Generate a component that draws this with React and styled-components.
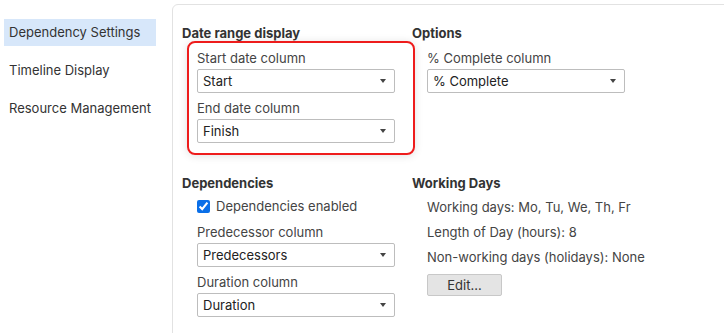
import React from 'react';
import styled, { createGlobalStyle } from 'styled-components';

const GlobalStyle = createGlobalStyle`
  html, body {
    margin: 0;
    padding: 0;
    background: #fff;
    overflow: hidden;
  }
  body {
    font-family: Inter, "Noto Sans", sans-serif;
    font-size: 13px;
    color: #333;
  }
`;

const NAV = ['Dependency Settings', 'Timeline Display', 'Resource Management'];

const Page = styled.div`
  display: flex;
  align-items: flex-start;
  width: 724px;
  height: 333px;
  padding: 4px 0 0 4px;
  box-sizing: border-box;
`;

const Sidebar = styled.nav`
  width: 152px;
  flex-shrink: 0;
  display: flex;
  flex-direction: column;
  gap: 11px;
  padding-top: 15px;
`;

const NavItem = styled.div`
  height: 27px;
  line-height: 27px;
  padding-left: 5px;
  font-size: 13px;
  color: #333;
  background: ${(p) => (p.$active ? '#d7e7fa' : 'transparent')};
`;

const Panel = styled.section`
  flex-shrink: 0;
  margin-left: 16px;
  width: 620px;
  height: 400px;
  border: 1px solid #e2e2e2;
  border-radius: 6px;
  padding: 20px 0 0 9px;
  box-sizing: border-box;
  display: grid;
  grid-template-columns: 230px 300px;
  grid-template-rows: auto auto;
  row-gap: 20px;
  align-content: start;
`;

const Section = styled.div`
  display: flex;
  flex-direction: column;
`;

const Title = styled.div`
  font-weight: 700;
  font-size: 13px;
  line-height: 16px;
  color: #333;
`;

const Group = styled.div`
  display: flex;
  flex-direction: column;
  padding: ${(p) => (p.$flush ? '0' : '9px')} 0 12px 15px;
  width: 198px;
`;

const Highlight = styled(Group)`
  margin-left: 5px;
  padding: 7px 18px 10px 8px;
  border: 2px solid #ee1c1c;
  border-radius: 8px;
  box-shadow: 0 1px 8px rgba(0, 0, 0, 0.12);
`;

const Label = styled.div`
  font-size: 13px;
  line-height: 16px;
  color: #444;
  margin-top: ${(p) => (p.$first ? '0' : '7px')};
  margin-bottom: 3px;
`;

const SelectBox = styled.div`
  position: relative;
  width: 198px;
  height: 24px;
  box-sizing: border-box;
  border: 1px solid #bdbdbd;
  border-radius: 2px;
  padding-left: 5px;
  line-height: 22px;
  font-size: 13px;
  color: #222;
  background: #fff;
`;

const Caret = styled.span`
  position: absolute;
  right: 8px;
  top: 9px;
  width: 0;
  height: 0;
  border-left: 3.5px solid transparent;
  border-right: 3.5px solid transparent;
  border-top: 4px solid #444;
`;

const CheckRow = styled.label`
  display: flex;
  align-items: center;
  gap: 6px;
  line-height: 16px;
  color: #444;
  margin-top: 7px;
  margin-left: 15px;
  margin-bottom: 3px;
`;

const Check = styled.input`
  width: 13px;
  height: 13px;
  margin: 0;
  accent-color: #0a6fe8;
`;

const InfoList = styled.div`
  display: flex;
  flex-direction: column;
  align-items: flex-start;
  padding: 4px 0 0 15px;
`;

const InfoLine = styled.div`
  line-height: 25px;
  color: #444;
  white-space: nowrap;
`;

const Button = styled.button`
  margin-top: 4px;
  width: 75px;
  height: 22px;
  border: 1px solid #c8c8c8;
  border-radius: 2px;
  background: #e4e4e4;
  font-family: inherit;
  font-size: 13px;
  color: #333;
  padding: 0;
`;

const Select = ({ value }) => (
  <SelectBox>
    {value}
    <Caret />
  </SelectBox>
);

export default function App() {
  return (
    <>
      <GlobalStyle />
      <Page>
        <Sidebar>
          {NAV.map((n, i) => (
            <NavItem key={n} $active={i === 0}>{n}</NavItem>
          ))}
        </Sidebar>
        <Panel>
          <Section>
            <Title>Date range display</Title>
            <Highlight>
              <Label $first>Start date column</Label>
              <Select value="Start" />
              <Label>End date column</Label>
              <Select value="Finish" />
            </Highlight>
          </Section>
          <Section>
            <Title>Options</Title>
            <Group>
              <Label $first>% Complete column</Label>
              <Select value="% Complete" />
            </Group>
          </Section>
          <Section>
            <Title>Dependencies</Title>
            <CheckRow>
              <Check type="checkbox" defaultChecked />
              Dependencies enabled
            </CheckRow>
            <Group $flush>
              <Label>Predecessor column</Label>
              <Select value="Predecessors" />
              <Label>Duration column</Label>
              <Select value="Duration" />
            </Group>
          </Section>
          <Section>
            <Title>Working Days</Title>
            <InfoList>
              <InfoLine>Working days: Mo, Tu, We, Th, Fr</InfoLine>
              <InfoLine>Length of Day (hours): 8</InfoLine>
              <InfoLine>Non-working days (holidays): None</InfoLine>
              <Button>Edit...</Button>
            </InfoList>
          </Section>
        </Panel>
      </Page>
    </>
  );
}
